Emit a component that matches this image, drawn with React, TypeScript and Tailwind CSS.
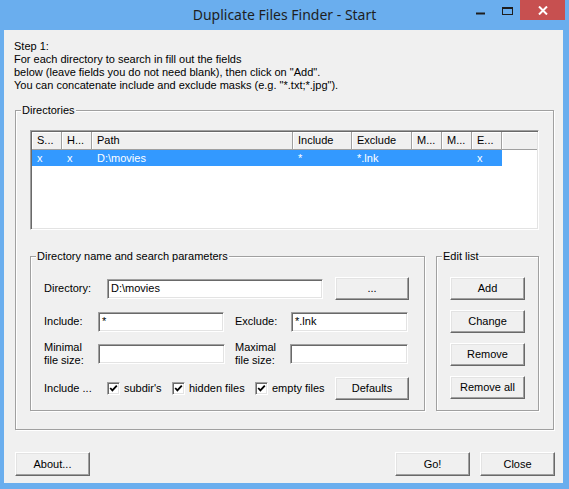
import clsx from "clsx";
import type { ReactNode } from "react";

const raised =
  "bg-[#f0f0f0] border border-t-white border-l-white border-r-[#696969] border-b-[#696969] shadow-[inset_-1px_-1px_0_#a0a0a0,inset_1px_1px_0_#e3e3e3]";
const sunken =
  "bg-white border border-t-[#a0a0a0] border-l-[#a0a0a0] border-r-white border-b-white shadow-[inset_1px_1px_0_#696969,inset_-1px_-1px_0_#e3e3e3]";
const etched = "border border-[#a0a0a0] shadow-[inset_1px_1px_0_#fff,1px_1px_0_#fff]";

function Button({ children, className }: { children: ReactNode; className?: string }) {
  return <button className={clsx("flex items-center justify-center text-black", raised, className)}>{children}</button>;
}

function Field({ value, className }: { value?: string; className?: string }) {
  return <div className={clsx("h-[20px] flex items-center pl-[3px]", sunken, className)}>{value}</div>;
}

function Check({ label, className }: { label: string; className?: string }) {
  return (
    <div className={clsx("flex items-center", className)}>
      <div className={clsx("w-[13px] h-[13px] flex items-center justify-center", sunken)}>
        <svg width="9" height="9" viewBox="0 0 9 9">
          <polyline points="1.2,4 3.4,6.4 7.8,1.6" fill="none" stroke="#000" strokeWidth="1.8" />
        </svg>
      </div>
      <span className="ml-[4px]">{label}</span>
    </div>
  );
}

function Group({ label, children, className, bodyClass }: { label: string; children: ReactNode; className?: string; bodyClass?: string }) {
  return (
    <fieldset className={clsx("p-0 m-0 min-w-0", etched, className)}>
      <legend className="ml-[5px] px-[1px] bg-[#f0f0f0] leading-[13px]">{label}</legend>
      <div className={bodyClass}>{children}</div>
    </fieldset>
  );
}

const columns = [
  { title: "S...", w: "w-[30px]", value: "x" },
  { title: "H...", w: "w-[30px]", value: "x" },
  { title: "Path", w: "w-[201px]", value: "D:\\movies" },
  { title: "Include", w: "w-[59px]", value: "*" },
  { title: "Exclude", w: "w-[60px]", value: "*.lnk" },
  { title: "M...", w: "w-[30px]", value: "" },
  { title: "M...", w: "w-[30px]", value: "" },
  { title: "E...", w: "w-[30px]", value: "x" },
];

export default function App() {
  return (
    <div className="w-[569px] h-[489px] bg-[#6aaeee] flex flex-col font-['Liberation_Sans',Arial,sans-serif] text-[11px] leading-[13px] text-black">
      {/* title bar */}
      <div className="h-[30px] shrink-0 grid grid-cols-[1fr_auto_1fr]">
        <div />
        <div className="font-['Noto_Sans',sans-serif] text-[14px] leading-[30px] text-[#1e1e1e]">Duplicate Files Finder - Start</div>
        <div className="flex justify-end items-start pr-[4px]">
          <svg width="26" height="20" viewBox="0 0 26 20">
            <rect x="9" y="12.5" width="9" height="2" fill="#1e1e1e" />
          </svg>
          <svg width="27" height="20" viewBox="0 0 27 20">
            <rect x="9.5" y="7.5" width="10" height="7" fill="none" stroke="#1e1e1e" strokeWidth="1" />
            <rect x="9" y="7" width="11" height="2" fill="#1e1e1e" />
          </svg>
          <div className="w-[45px] h-[20px] bg-[#c75050] flex items-center justify-center">
            <svg width="10" height="9" viewBox="0 0 10 9">
              <path d="M1 0.5 L9 8.5 M9 0.5 L1 8.5" stroke="#fff" strokeWidth="2" />
            </svg>
          </div>
        </div>
      </div>

      {/* client area */}
      <div className="flex-1 ml-[4px] mr-[6px] mb-[6px] bg-[#f0f0f0] flex flex-col">
        <div className="pl-[10px] pt-[10px]">
          <p>Step 1:</p>
          <p>For each directory to search in fill out the fields</p>
          <p>below (leave fields you do not need blank), then click on "Add".</p>
          <p>You can concatenate include and exclude masks (e.g. "*.txt;*.jpg").</p>
        </div>

        <Group label="Directories" className="ml-[11px] mt-[12px] w-[539px]" bodyClass="pl-[14px] pr-[14px] pt-[13px] pb-[18px]">
          {/* list view */}
          <div className={clsx("h-[100px] w-[509px] flex flex-col overflow-hidden", sunken)}>
            <div className="flex h-[18px] shrink-0 mx-[1px] mt-[1px] bg-[#f0f0f0] border-b border-[#a0a0a0]">
              {columns.map((c, i) => (
                <div key={i} className={clsx("pl-[5px] flex items-center whitespace-nowrap border-r border-[#a0a0a0] shadow-[inset_1px_1px_0_#fff]", c.w)}>
                  {c.title}
                </div>
              ))}
              <div className="flex-1 shadow-[inset_1px_1px_0_#fff]" />
            </div>
            <div className="flex h-[16px] ml-[1px] self-start bg-[#3399ff] text-white">
              {columns.map((c, i) => (
                <div key={i} className={clsx("pl-[5px] flex items-center whitespace-nowrap", c.w)}>
                  {c.value}
                </div>
              ))}
            </div>
          </div>

          <div className="flex mt-[20px] gap-[11px]">
            <Group label="Directory name and search parameters" className="w-[395px]" bodyClass="pl-[13px] pt-[14px] pb-[10px] flex flex-col">
              <div className="flex items-center h-[23px]">
                <span className="w-[63px]">Directory:</span>
                <Field value="D:\movies" className="w-[216px]" />
                <Button className="ml-[12px] w-[74px] h-[23px]">...</Button>
              </div>
              <div className="flex items-center h-[23px] mt-[10px]">
                <span className="w-[54px]">Include:</span>
                <Field value="*" className="w-[126px]" />
                <span className="ml-[11px] w-[56px]">Exclude:</span>
                <Field value="*.lnk" className="w-[117px]" />
              </div>
              <div className="flex items-center h-[26px] mt-[8px]">
                <span className="w-[54px]">
                  Minimal
                  <br />
                  file size:
                </span>
                <Field className="w-[127px]" />
                <span className="ml-[10px] w-[55px]">
                  Maximal
                  <br />
                  file size:
                </span>
                <Field className="w-[118px]" />
              </div>
              <div className="flex items-center h-[23px] mt-[10px]">
                <span className="w-[63px]">Include ...</span>
                <Check label="subdir's" className="w-[65px]" />
                <Check label="hidden files" className="w-[83px]" />
                <Check label="empty files" className="w-[80px]" />
                <Button className="w-[74px] h-[23px]">Defaults</Button>
              </div>
            </Group>

            <Group label="Edit list" className="w-[103px]" bodyClass="pl-[13px] pt-[14px] pb-[10px] flex flex-col gap-[10px]">
              <Button className="w-[75px] h-[23px]">Add</Button>
              <Button className="w-[75px] h-[23px]">Change</Button>
              <Button className="w-[75px] h-[23px]">Remove</Button>
              <Button className="w-[75px] h-[23px]">Remove all</Button>
            </Group>
          </div>
        </Group>

        <div className="flex mt-[22px] pl-[11px] pr-[8px]">
          <Button className="w-[75px] h-[24px]">About...</Button>
          <Button className="ml-auto w-[75px] h-[24px]">Go!</Button>
          <Button className="ml-[10px] w-[75px] h-[24px]">Close</Button>
        </div>
      </div>
    </div>
  );
}
